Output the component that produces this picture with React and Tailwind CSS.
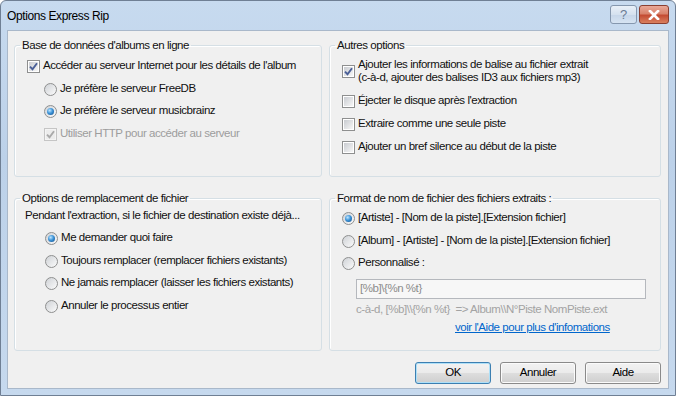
import React from "react";

function Check({ checked, disabled }) {
  return (
    <span
      className={`flex h-[13px] w-[13px] shrink-0 items-center justify-center border p-[1px] ${
        disabled ? "border-[#c5c5c5] bg-[#f4f4f4]" : "border-[#8e8f8f] bg-white"
      }`}
    >
      <span
        className={`flex h-full w-full items-center justify-center ${
          disabled
            ? "bg-[#ececec]"
            : "bg-gradient-to-br from-[#c9ccd1] to-[#f7f7f7]"
        }`}
      >
        {checked && (
          <svg width="9" height="9" viewBox="0 0 9 9">
            <path
              d="M1 4.6 L3.5 7.2 L8 1.2"
              fill="none"
              stroke={disabled ? "#a9a9a9" : "#4a5f97"}
              strokeWidth="1.9"
            />
          </svg>
        )}
      </span>
    </span>
  );
}

function Radio({ checked }) {
  return (
    <span className="flex h-[13px] w-[13px] shrink-0 items-center justify-center rounded-full border border-[#8e8f8f] bg-gradient-to-br from-[#cfd2d6] to-[#fbfbfb]">
      {checked && (
        <span className="h-[7px] w-[7px] rounded-full bg-[radial-gradient(circle_at_38%_35%,#bfe6ff_0%,#3d94d8_45%,#0d4a86_100%)]" />
      )}
    </span>
  );
}

function Row({ children, control, className = "" }) {
  return (
    <div className={`flex h-[16px] items-center gap-[3px] ${className}`}>
      {control}
      <span className="whitespace-nowrap">{children}</span>
    </div>
  );
}

function Group({ title, className = "", children }) {
  return (
    <fieldset
      className={`rounded-[3px] border border-[#d5dfe5] p-0 shadow-[inset_1px_1px_0_#ffffff] ${className}`}
    >
      <legend className="ml-[5px] px-[2px] leading-[14px]">{title}</legend>
      {children}
    </fieldset>
  );
}

function Btn({ children, def }) {
  return (
    <button
      className={`h-[22px] w-[76px] rounded-[3px] border bg-[linear-gradient(#f2f2f2_0%,#ebebeb_48%,#dddddd_52%,#cfcfcf_100%)] text-black ${
        def
          ? "border-[#3c7fb1] shadow-[inset_0_0_0_1px_#aee0f8]"
          : "border-[#8a8a8a] shadow-[inset_0_0_0_1px_#fbfbfb]"
      }`}
    >
      {children}
    </button>
  );
}

export default function App() {
  return (
    <div className="flex h-[396px] w-[676px] flex-col rounded-t-[6px] border border-[#6f7f94] bg-[linear-gradient(#c7daef,#bcd1e9_40%,#c6d9ee)] font-['Liberation_Sans',Arial,sans-serif] text-[11.5px] tracking-[-0.45px] text-[#111111]">
      {/* title bar */}
      <div className="flex h-[29px] shrink-0 items-start justify-between pl-[6px] pr-[6px]">
        <span className="mt-[7px] text-[12px] leading-[16px] tracking-[-0.4px] text-black">
          Options Express Rip
        </span>
        <div className="mt-[4px] flex gap-[2px]">
          <div className="flex h-[19px] w-[27px] items-center justify-center rounded-[3px] border border-[#8597ae] bg-[linear-gradient(#e9f0f8,#d5e1ef_50%,#c6d6e9_51%,#d6e3f2)] text-[13px] text-[#6a7c94]">
            ?
          </div>
          <div className="flex h-[19px] w-[30px] items-center justify-center rounded-[3px] border border-[#8a3f31] bg-[linear-gradient(#e9a898,#d8836c_45%,#c44c33_55%,#d9805f)]">
            <svg width="12" height="10" viewBox="0 0 12 10">
              <path
                d="M2 1 L10 9 M10 1 L2 9"
                stroke="#ffffff"
                strokeWidth="2.6"
                strokeLinecap="square"
              />
            </svg>
          </div>
        </div>
      </div>

      {/* client area */}
      <div className="mx-[6px] flex h-[359px] flex-col border border-[#a9b8ca] bg-[#f0f0f0] pl-[6px] pr-[7px] pt-[7px]">
        <div className="grid grid-cols-[308px_332px] gap-x-[7px] gap-y-[14px]">
          <Group title="Base de données d'albums en ligne" className="h-[139px]">
            <div className="pl-[12px] pt-[6px]">
              <Row control={<Check checked />}>
                Accéder au serveur Internet pour les détails de l'album
              </Row>
              <div className="ml-[17px]">
                <Row control={<Radio />} className="mt-[7px]">
                  Je préfère le serveur FreeDB
                </Row>
                <Row control={<Radio checked />} className="mt-[6px]">
                  Je préfère le serveur musicbrainz
                </Row>
                <Row control={<Check checked disabled />} className="mt-[7px] text-[#9d9d9d]">
                  Utiliser HTTP pour accéder au serveur
                </Row>
              </div>
            </div>
          </Group>

          <Group title="Autres options" className="h-[139px]">
            <div className="pl-[12px] pt-[6px]">
              <div className="flex items-center gap-[3px]">
                <Check checked />
                <span className="leading-[13px]">
                  Ajouter les informations de balise au fichier extrait
                  <br />
                  (c-à-d, ajouter des balises ID3 aux fichiers mp3)
                </span>
              </div>
              <Row control={<Check />} className="mt-[9px]">
                Éjecter le disque après l'extraction
              </Row>
              <Row control={<Check />} className="mt-[7px]">
                Extraire comme une seule piste
              </Row>
              <Row control={<Check />} className="mt-[7px]">
                Ajouter un bref silence au début de la piste
              </Row>
            </div>
          </Group>

          <Group title="Options de remplacement de fichier" className="h-[160px]">
            <div className="pl-[10px] pt-[3px]">
              <div className="flex h-[16px] items-center whitespace-nowrap">
                Pendant l'extraction, si le fichier de destination existe déjà...
              </div>
              <div className="ml-[20px]">
                <Row control={<Radio checked />} className="mt-[6px]">
                  Me demander quoi faire
                </Row>
                <Row control={<Radio />} className="mt-[7px]">
                  Toujours remplacer (remplacer fichiers existants)
                </Row>
                <Row control={<Radio />} className="mt-[6px]">
                  Ne jamais remplacer (laisser les fichiers existants)
                </Row>
                <Row control={<Radio />} className="mt-[7px]">
                  Annuler le processus entier
                </Row>
              </div>
            </div>
          </Group>

          <Group title="Format de nom de fichier des fichiers extraits :" className="h-[160px]">
            <div className="pl-[12px] pt-[5px]">
              <Row control={<Radio checked />}>
                [Artiste] - [Nom de la piste].[Extension fichier]
              </Row>
              <Row control={<Radio />} className="mt-[7px]">
                [Album] - [Artiste] - [Nom de la piste].[Extension fichier]
              </Row>
              <Row control={<Radio />} className="mt-[6px]">
                Personnalisé :
              </Row>
              <div className="ml-[14px] mt-[8px] flex h-[20px] w-[290px] items-center border border-[#b5b8bd] bg-[#f7f7f7] px-[3px] text-[#8c8c8c]">
                [%b]\{"{"}%n %t{"}"}
              </div>
              <div className="ml-[14px] mt-[3px] flex h-[16px] items-center whitespace-nowrap text-[#a3a3a3]">
                c-à-d, [%b]\\{"{"}%n %t{"}"}&nbsp;&nbsp;=&gt; Album\\N°Piste NomPiste.ext
              </div>
              <div className="ml-[113px] mt-[2px] flex h-[16px] items-center whitespace-nowrap text-[#0066cc] underline">
                voir l'Aide pour plus d'infomations
              </div>
            </div>
          </Group>
        </div>

        <div className="mt-[11px] flex justify-end gap-[9px]">
          <Btn def>OK</Btn>
          <Btn>Annuler</Btn>
          <Btn>Aide</Btn>
        </div>
      </div>
    </div>
  );
}
